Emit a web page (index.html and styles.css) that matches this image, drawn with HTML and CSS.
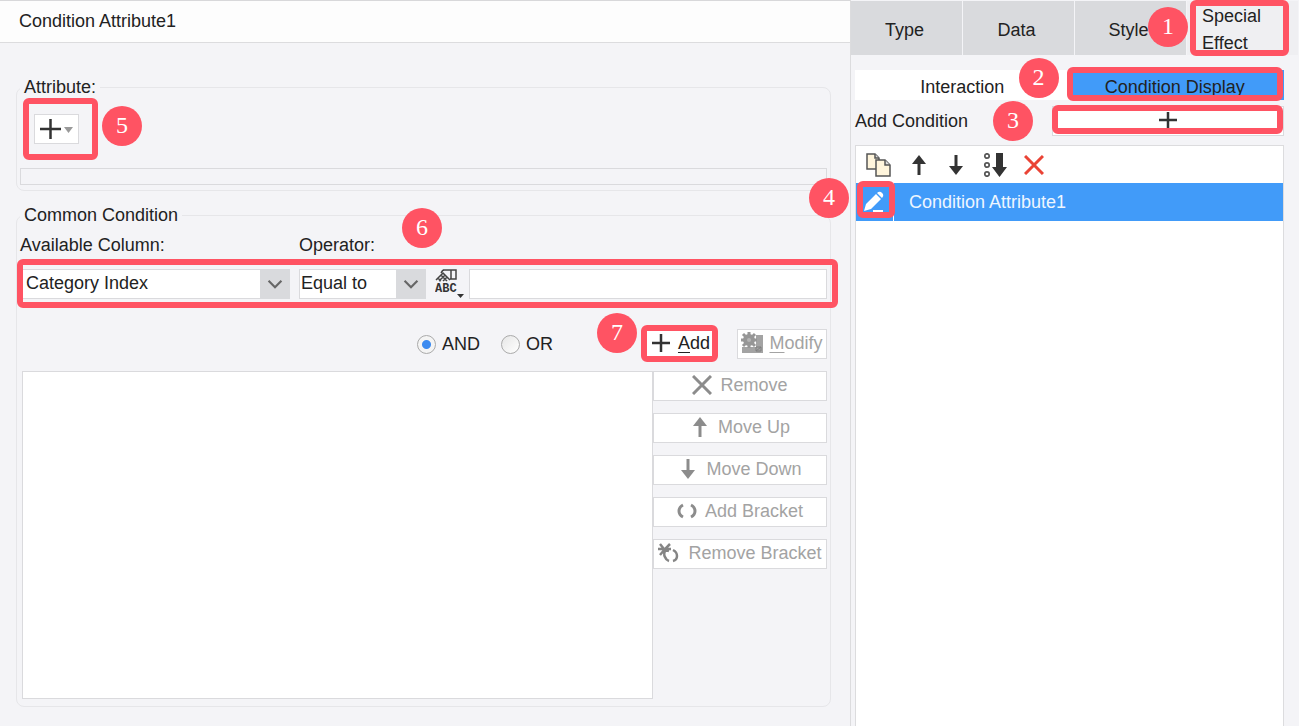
FILE: index.html
```html
<!DOCTYPE html>
<html lang="en">
<head>
  <meta charset="UTF-8">
  <title>Condition Attribute1</title>
  <link rel="stylesheet" href="styles.css">
</head>
<body>
  <!-- Condition editor -->
  <main class="editor">
    <h1 class="editor-title">Condition Attribute1</h1>

    <fieldset class="group">
      <legend>Attribute:</legend>
      <div class="attr-tools">
        <button class="btn btn-attr" aria-label="Add attribute">
          <svg width="34" height="22" viewBox="0 0 34 22">
            <path d="M0 11h21M10.500 1v20" stroke="#333" stroke-width="2.500" fill="none"/>
            <path d="M24 9h9l-4.500 6z" fill="#999"/>
          </svg>
        </button>
        <span class="mark mark-attr"></span>
        <span class="step step-5">5</span>
      </div>
      <div class="attr-strip"></div>
    </fieldset>

    <fieldset class="group group-condition">
      <legend>Common Condition</legend>
      <div class="cond-row cond-labels">
        <label for="column">Available Column:</label>
        <label for="operator">Operator:</label>
        <span class="step step-6">6</span>
      </div>
      <div class="cond-row">
        <div class="combo combo-column">
          <select id="column"><option>Category Index</option></select>
          <svg class="chevron" viewBox="0 0 28 28"><path d="M8 11l6 6 6-6" fill="none" stroke="#666" stroke-width="2"/></svg>
        </div>
        <div class="combo">
          <select id="operator"><option>Equal to</option></select>
          <svg class="chevron" viewBox="0 0 28 28"><path d="M8 11l6 6 6-6" fill="none" stroke="#666" stroke-width="2"/></svg>
        </div>
        <button class="value-type" aria-label="Value type">
          <svg width="30" height="30" viewBox="0 0 30 30">
            <g fill="none" stroke="#444" stroke-width="1.500">
              <path d="M8 1h13v9h-6M16 1v9M8 1L6 4"/>
              <path d="M1 11l7-7 7 7M4 12l6-6M8 12l4-4M6 6l6 6M3 9l3 3"/>
            </g>
            <text class="abc" x="0" y="23">ABC</text>
            <path d="M22 25h7l-3.500 4z" fill="#333"/>
          </svg>
        </button>
        <input class="value-input" type="text" aria-label="Value">
        <span class="mark mark-cond"></span>
      </div>

      <div class="logic-row">
        <label class="radio"><input type="radio" name="logic" checked>AND</label>
        <label class="radio"><input type="radio" name="logic">OR</label>
        <div class="add-wrap">
          <button class="btn btn-add">
            <svg width="18" height="18" viewBox="0 0 18 18"><path d="M0 9h18M9 0v18" stroke="#333" stroke-width="2.500"/></svg>
            <span><u>A</u>dd</span>
          </button>
          <span class="mark mark-add"></span>
          <span class="step step-7">7</span>
        </div>
        <button class="btn btn-modify" disabled>
          <svg width="22" height="22" viewBox="0 0 22 22">
            <path d="M15 3h7v18H1v-6h14z" fill="#a3a3a3"/>
            <circle cx="8" cy="8" r="6" fill="#969696"/>
            <path d="M8 0v16M0 8h16M2 2l12 12M14 2L2 14" stroke="#969696" stroke-width="3"/>
            <circle cx="8" cy="8" r="2" fill="#b4b4b4"/>
            <path d="M15 15h5v4h-5zM15 19l5-4" fill="none" stroke="#808080"/>
          </svg>
          <span><u>M</u>odify</span>
        </button>
      </div>

      <div class="cond-body">
        <div class="cond-list" role="listbox" aria-label="Conditions"></div>
        <div class="cond-actions">
          <button class="btn" disabled>
            <svg width="20" height="20" viewBox="0 0 20 20"><path d="M1 1l18 18M19 1L1 19" stroke="#8c8c8c" stroke-width="3"/></svg>
            Remove
          </button>
          <button class="btn" disabled>
            <svg width="20" height="20" viewBox="0 0 20 20"><path d="M10 6v14" stroke="#8c8c8c" stroke-width="3"/><path d="M10 0l7 9H3z" fill="#8c8c8c"/></svg>
            Move Up
          </button>
          <button class="btn" disabled>
            <svg width="20" height="20" viewBox="0 0 20 20"><path d="M10 0v14" stroke="#8c8c8c" stroke-width="3"/><path d="M10 20l7-9H3z" fill="#8c8c8c"/></svg>
            Move Down
          </button>
          <button class="btn" disabled>
            <svg width="20" height="20" viewBox="0 0 20 20"><path d="M6 4q-4 2-4 6t4 6M14 4q4 2 4 6t-4 6" fill="none" stroke="#8c8c8c" stroke-width="3"/></svg>
            Add Bracket
          </button>
          <button class="btn" disabled>
            <svg width="22" height="20" viewBox="0 0 22 20"><path d="M2 1l4 5 5 2M12 1L7 6l-5 6M0 6h13M8 6q-3 5-1 8 1 3 4 4M15 7q4 2 4 6t-4 5" fill="none" stroke="#858585" stroke-width="2.500"/></svg>
            Remove Bracket
          </button>
        </div>
      </div>
    </fieldset>
  </main>

  <!-- Settings pane -->
  <aside class="pane">
    <nav class="tabs">
      <button class="tab">Type</button>
      <button class="tab">Data</button>
      <button class="tab">Style</button>
      <div class="tab-wrap">
        <button class="tab tab-active">Special Effect</button>
        <span class="mark mark-tab"></span>
        <span class="step step-1">1</span>
      </div>
    </nav>

    <div class="pane-body">
      <div class="subtabs">
        <button class="subtab">Interaction</button>
        <div class="subtab-wrap">
          <button class="subtab subtab-active">Condition Display</button>
          <span class="mark mark-subtab"></span>
          <span class="step step-2">2</span>
        </div>
      </div>

      <div class="add-condition">
        <label for="addCondition">Add Condition</label>
        <div class="add-condition-wrap">
          <button class="btn" id="addCondition">
            <svg width="18" height="18" viewBox="0 0 18 18"><path d="M0 9h18M9 1v16" stroke="#333" stroke-width="2.500"/></svg>
          </button>
          <span class="mark mark-addcond"></span>
          <span class="step step-3">3</span>
        </div>
      </div>

      <div class="list-panel">
        <div class="toolbar">
          <button class="tool" aria-label="Copy">
            <svg width="26" height="24" viewBox="0 0 26 24" fill="#fff5dc" stroke="#555" stroke-width="1.500">
              <path d="M1 1h8l4 4v11H1z"/><path d="M9 1v4h4" fill="#ddd"/>
              <path d="M10 7h9l5 5v11H10z"/><path d="M19 7v5h5" fill="#ddd"/>
            </svg>
          </button>
          <button class="tool" aria-label="Move up">
            <svg width="20" height="20" viewBox="0 0 20 20"><path d="M10 6v14" stroke="#333" stroke-width="3"/><path d="M10 0l7 9H3z" fill="#333"/></svg>
          </button>
          <button class="tool" aria-label="Move down">
            <svg width="20" height="20" viewBox="0 0 20 20"><path d="M10 0v14" stroke="#333" stroke-width="3"/><path d="M10 20l7-9H3z" fill="#333"/></svg>
          </button>
          <button class="tool" aria-label="Priority">
            <svg width="24" height="24" viewBox="0 0 24 24">
              <g fill="none" stroke="#555" stroke-width="1.700"><circle cx="4" cy="3" r="2.200"/><circle cx="4" cy="12" r="2.200"/><circle cx="4" cy="21" r="2.200"/></g>
              <path d="M13 0h7v14h4l-7.500 10L9 14h4z" fill="#333"/>
            </svg>
          </button>
          <button class="tool" aria-label="Delete">
            <svg width="20" height="20" viewBox="0 0 20 20"><path d="M1 1l18 18M19 1L1 19" stroke="#ea4335" stroke-width="3"/></svg>
          </button>
        </div>
        <ul class="cond-items">
          <li class="cond-item">
            <button class="edit" aria-label="Edit">
              <svg width="22" height="22" viewBox="0 0 22 22" fill="#fff"><path d="M0 20l2-7L12 3l5 5L7 18zM13 2q2-2 4-1l2 2q1 2-1 4zM9 19h10v2H9z"/></svg>
            </button>
            <span class="cond-name">Condition Attribute1</span>
            <span class="mark mark-edit"></span>
            <span class="step step-4">4</span>
          </li>
        </ul>
      </div>
    </div>
  </aside>
</body>
</html>
```
FILE: styles.css
```css
* {
  box-sizing: border-box;
}
body {
  margin: 0;
  min-height: 100vh;
  display: flex;
  background-color: #f4f4f7;
  color: #222;
  font: 18px/20px "Liberation Sans", Arial, sans-serif;
}
button,
input,
select {
  font: inherit;
  color: inherit;
  margin: 0;
}
button {
  border: 0;
  padding: 0;
  background: none;
  cursor: pointer;
}
svg {
  display: block;
  flex: none;
}

/* Left: editor */
.editor {
  flex: 1;
  min-width: 0;
}
.editor-title {
  margin: 0 0 34px;
  padding: 10px 19px 11px;
  border-top: 1px solid #d8d8da;
  border-bottom: 1px solid #dcdcde;
  background-color: #fdfdfd;
  font-size: 18px;
  font-weight: normal;
}
.group {
  margin: 0 19px 14px 16px;
  padding: 0 3px 5px;
  min-width: 0;
  border: 1px solid #e6e6e9;
  border-radius: 8px;
}
.group legend {
  padding: 0 4px;
}
.attr-tools {
  position: relative;
  display: flex;
  padding: 17px 14px 24px;
}
.attr-strip {
  height: 17px;
  border: 1px solid #dadadd;
}

/* Buttons */
.btn {
  display: flex;
  align-items: center;
  justify-content: center;
  gap: 8px;
  height: 30px;
  padding-bottom: 2px;
  border: 1px solid #dadadd;
  background-color: #fff;
  white-space: nowrap;
}
.btn:disabled {
  color: #a3a3a3;
  cursor: default;
}
.btn-attr {
  width: 45px;
  padding-bottom: 0;
}

/* Condition inputs */
.group-condition {
  padding-bottom: 7px;
}
.cond-row {
  position: relative;
  display: grid;
  grid-template-columns: 270px 127px 25px 1fr;
  column-gap: 9px;
  margin-bottom: 30px;
}
.cond-labels {
  padding-top: 10px;
  margin-bottom: 14px;
}
.combo {
  position: relative;
}
.combo select {
  appearance: none;
  width: 100%;
  height: 30px;
  padding: 0 0 2px 1px;
  border: 1px solid #dadadd;
  border-radius: 0;
  background-color: #fff;
}
.combo-column select {
  padding-left: 5px;
}
.chevron {
  position: absolute;
  top: 0;
  right: 0;
  width: 30px;
  height: 30px;
  background-color: #d9dadd;
  pointer-events: none;
}
.abc {
  fill: #333;
  font: bold 12px "Liberation Mono", monospace;
}
.value-input {
  min-width: 0;
  height: 30px;
  border: 1px solid #dadadd;
  background-color: #fff;
}
.logic-row {
  display: flex;
  justify-content: flex-end;
  align-items: center;
  margin-bottom: 12px;
}
.radio {
  display: flex;
  align-items: center;
  gap: 6px;
  margin-right: 21px;
}
.radio input {
  appearance: none;
  width: 19px;
  height: 19px;
  border: 1px solid #aaa;
  border-radius: 50%;
  background: linear-gradient(135deg, #e6e6e6, #fff);
}
.radio input:checked {
  background: radial-gradient(circle, #3d8bf0 4px, #f4f4f4 5px);
}
.add-wrap {
  position: relative;
  margin: 0 20px 0 71px;
}
.btn-add {
  width: 72px;
}
.btn-modify {
  width: 90px;
  gap: 6px;
}
u {
  text-underline-offset: 3px;
}

.cond-body {
  display: flex;
  padding-left: 2px;
}
.cond-list {
  flex: 1;
  min-height: 328px;
  border: 1px solid #dadadd;
  background-color: #fff;
}
.cond-actions {
  display: flex;
  flex-direction: column;
  gap: 12px;
  width: 174px;
}

/* Right: settings pane */
.pane {
  display: flex;
  flex-direction: column;
  width: 449px;
  padding-top: 1px;
  border-left: 1px solid #dcdcde;
}
.tabs {
  display: grid;
  grid-template-columns: repeat(4, 1fr);
  height: 54px;
}
.tab {
  width: 100%;
  padding: 4px 4px 0 0;
  border-right: 1px solid #f4f4f7;
  background-color: #d9dadd;
}
.tab-wrap,
.subtab-wrap,
.add-condition-wrap {
  position: relative;
}
.tab-active {
  height: 54px;
  padding: 2px 24px 0 15px;
  background-color: #efeff2;
  line-height: 27px;
  text-align: left;
}
.pane-body {
  flex: 1;
  display: flex;
  flex-direction: column;
  padding: 15px 15px 0 4px;
}
.subtabs {
  display: grid;
  grid-template-columns: 1fr 1fr;
  height: 30px;
}
.subtab {
  width: 100%;
  height: 30px;
  padding-top: 4px;
  background-color: #fff;
}
.subtab-active {
  padding-right: 4px;
  background-color: #419bf9;
}
.add-condition {
  display: flex;
  justify-content: space-between;
  align-items: center;
  margin: 6px 0 9px;
}
.add-condition-wrap {
  width: 232px;
}
.add-condition .btn {
  width: 100%;
}
.list-panel {
  flex: 1;
  border: 1px solid #dcdcde;
  border-bottom: 0;
  background-color: #fff;
}
.toolbar {
  display: flex;
  align-items: center;
  gap: 17px;
  height: 37px;
  padding-left: 10px;
}
.cond-items {
  list-style: none;
  margin: 0;
  padding: 0;
}
.cond-item {
  position: relative;
  display: flex;
  align-items: center;
  height: 38px;
  background-color: #419bf9;
  color: #eef6ff;
}
.edit {
  width: 38px;
  height: 38px;
  padding-left: 8px;
  border-right: 1px solid #fff;
}
.cond-name {
  padding-left: 15px;
}

/* Step marks drawn over the controls */
.mark {
  position: absolute;
  border: 6px solid #ff5363;
  border-radius: 6px;
  pointer-events: none;
}
.step {
  position: absolute;
  width: 40px;
  height: 40px;
  border-radius: 50%;
  background-color: #ff5363;
  color: #fff;
  font: 24px/38px "Liberation Serif", serif;
  text-align: center;
}
.mark-attr { inset: 1px auto 8px 3px; width: 75px; }
.mark-cond { inset: -10px -11px -9px -3px; }
.mark-add { inset: -4px -1px -3px -4px; }
.mark-tab { inset: -1px 10px -1px 3px; }
.mark-subtab { inset: -3px 1px -1px -3px; }
.mark-addcond { inset: -1px 1px 2px 0; }
.mark-edit { top: -2px; left: 1px; width: 38px; height: 37px; }
.step-1 { top: 6px; left: -39px; }
.step-2 { top: -12px; left: -51px; }
.step-3 { top: -5px; left: -59px; }
.step-4 { top: -5px; left: -47px; }
.step-5 { top: 9px; left: 82px; }
.step-6 { top: -17px; left: 382px; }
.step-7 { top: -16px; left: -48px; }
```
